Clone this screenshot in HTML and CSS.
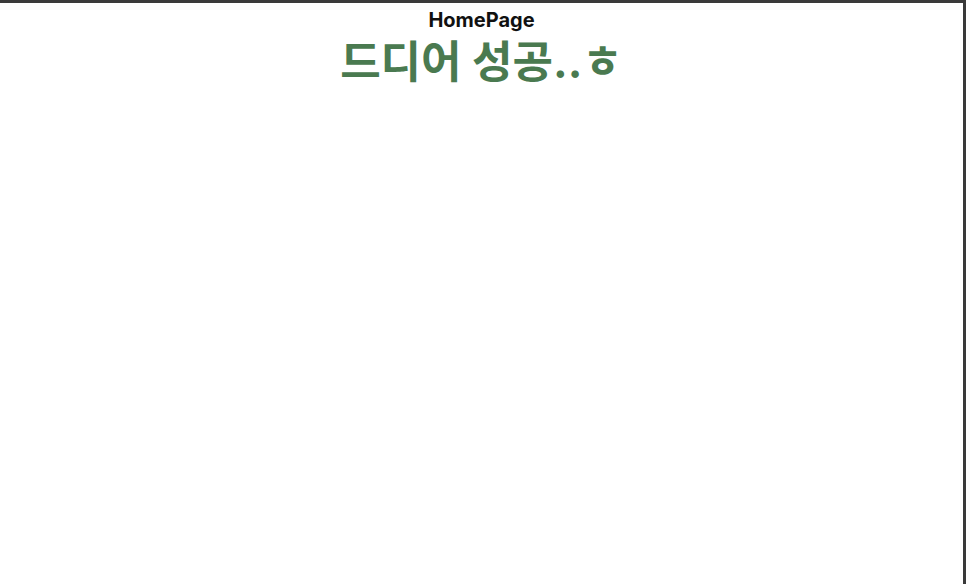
FILE: index.html
```html
<!DOCTYPE html>
<html lang="ko">
<head>
    <meta charset="UTF-8">
    <meta name="viewport" content="width=device-width, initial-scale=1.0">
    <title>HomePage</title>
    <link rel="stylesheet" href="styles.css">
</head>
<body>
    <div class="page">
        <header class="home-header">
            <h3>HomePage</h3>
            <h1>드디어 성공..ㅎ</h1>
        </header>
    </div>
</body>
</html>
```

FILE: styles.css
```css
/* 전체 페이지 */
body {
    margin: 0;
    padding: 0;
    background: #fff;
    font-family: Inter, "Noto Sans CJK KR", sans-serif;
}

.page {
    height: 100vh;
    box-sizing: border-box;
    border-top: 3px solid #3a3a3a;
    border-right: 3px solid #3a3a3a;
}

/* 헤더 */
.home-header {
    display: flex;
    flex-direction: column;
    align-items: center;
    padding-top: 6px;
}

.home-header h3 {
    margin: 0;
    font-size: 20px;
    font-weight: 700;
    color: #111;
    line-height: 22px;
}

.home-header h1 {
    margin: 0;
    font-size: 44px;
    font-weight: 700;
    color: #4a7a50;
    line-height: 62px;
}
```
